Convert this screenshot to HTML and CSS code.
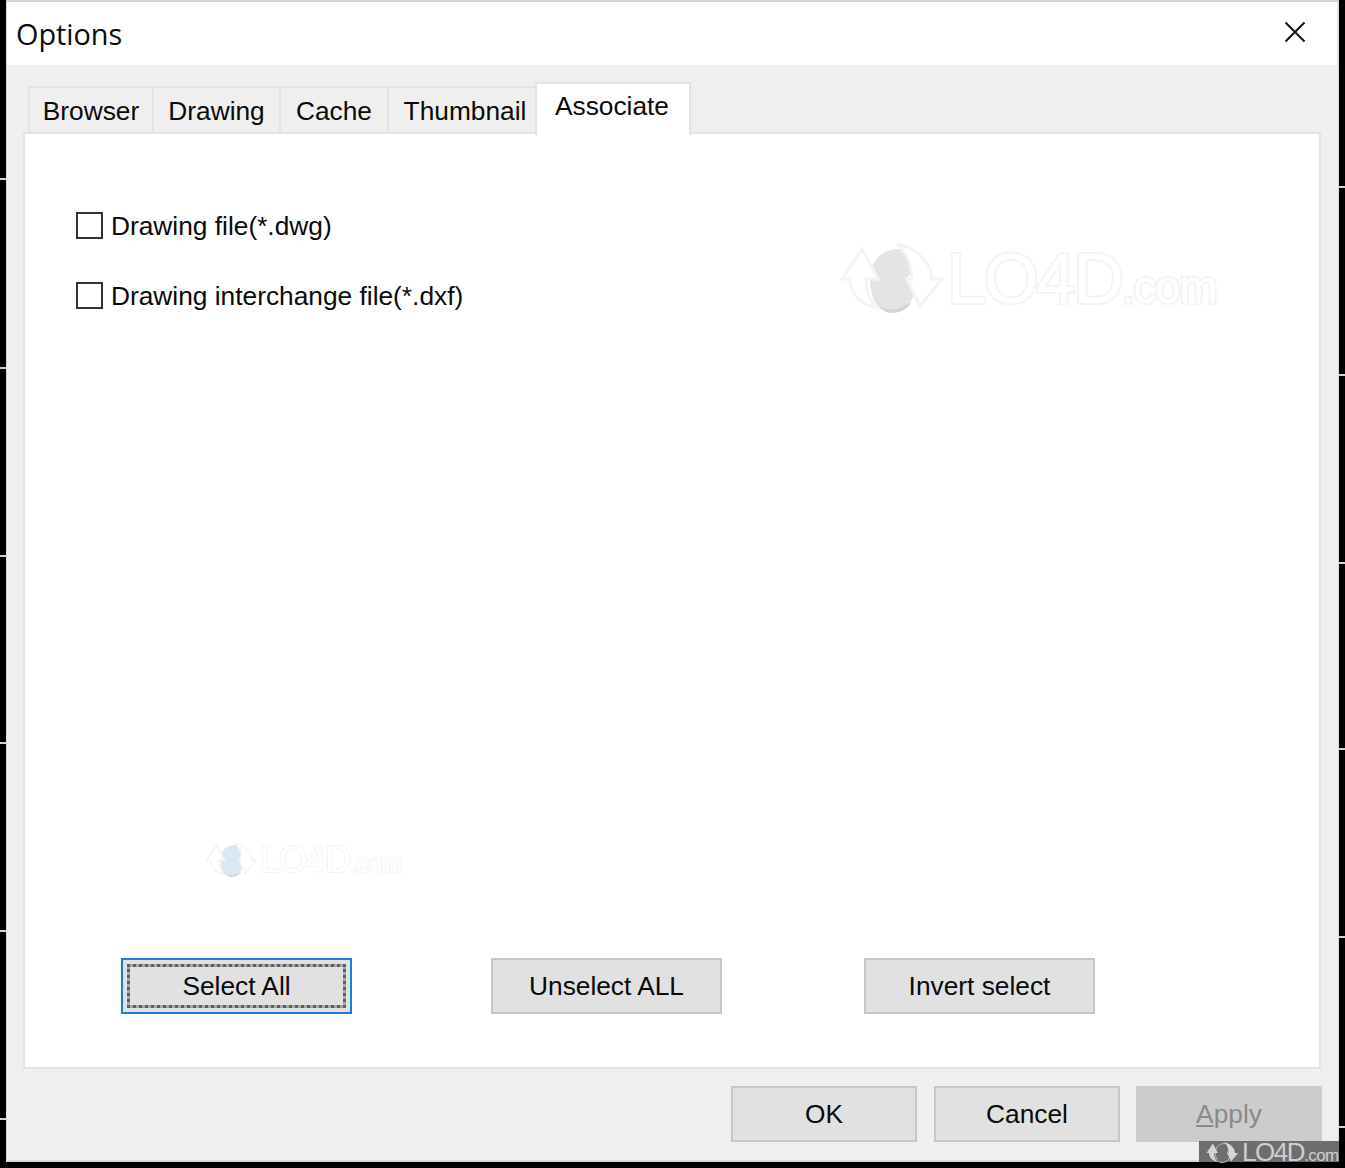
FILE: index.html
```html
<!DOCTYPE html>
<html lang="en">
<head>
<meta charset="utf-8">
<title>Options</title>
<link rel="stylesheet" href="styles.css">
</head>
<body>
<div class="screen">
  <i class="tick tl t1"></i><i class="tick tl t2"></i><i class="tick tl t3"></i><i class="tick tl t4"></i><i class="tick tl t5"></i><i class="tick tl t6"></i>
  <i class="tick tr r1"></i><i class="tick tr r2"></i><i class="tick tr r3"></i><i class="tick tr r4"></i><i class="tick tr r5"></i><i class="tick tr r6"></i>
  <div class="dialog">
    <header class="titlebar">
      <span class="title">Options</span>
      <svg class="close" width="22" height="22" viewBox="0 0 22 22"><path d="M1.5 1.5 20.5 20.5M20.5 1.5 1.5 20.5" stroke="#111" stroke-width="2" fill="none"/></svg>
    </header>
    <main class="content">
      <nav class="tabs">
        <span class="tab tab-browser">Browser</span>
        <span class="tab tab-drawing">Drawing</span>
        <span class="tab tab-cache">Cache</span>
        <span class="tab tab-thumb">Thumbnail</span>
        <span class="tab active">Associate</span>
      </nav>
      <section class="panel">
        <div class="checks">
          <label class="check"><span class="box"></span>Drawing file(*.dwg)</label>
          <label class="check"><span class="box"></span>Drawing interchange file(*.dxf)</label>
        </div>
        <div class="actions">
          <button class="btn focused"><span class="focus-ring">Select All</span></button>
          <button class="btn">Unselect ALL</button>
          <button class="btn">Invert select</button>
        </div>
        <div class="wm wm-big">
          <svg width="106" height="76" viewBox="0 0 106 76"><path class="shade" d="M33 48C35 62 44 72 54 72 62 72 70 68 74 60 66 67 42 68 33 48Z"/><path class="disc-grey" d="M32 38C32 22 42 9 58 8 70 8 77 14 77 24 77 30 72 34 69 36L72 38C77 44 78 52 74 58 68 66 56 70 50 68 38 68 32 52 32 38Z"/><path class="arrows" d="M24 8 4 38H12C12 52 22 63 39 67 32 60 28 50 28 38H40ZM82 65 104 38H94C94 22 80 8 59 3 68 10 74 24 74 38H69Z"/></svg>
          <span class="wm-text">LO4D<small>.com</small></span>
        </div>
        <div class="wm wm-small">
          <svg width="54" height="38" viewBox="0 0 106 76"><path class="shade" d="M33 48C35 62 44 72 54 72 62 72 70 68 74 60 66 67 42 68 33 48Z"/><path class="disc-blue" d="M32 38C32 22 42 9 58 8 70 8 77 14 77 24 77 30 72 34 69 36L72 38C77 44 78 52 74 58 68 66 56 70 50 68 38 68 32 52 32 38Z"/><path class="arrows" d="M24 8 4 38H12C12 52 22 63 39 67 32 60 28 50 28 38H40ZM82 65 104 38H94C94 22 80 8 59 3 68 10 74 24 74 38H69Z"/></svg>
          <span class="wm-text">LO4D<small>.com</small></span>
        </div>
      </section>
      <footer class="footer">
        <button class="btn foot">OK</button>
        <button class="btn foot">Cancel</button>
        <button class="btn foot disabled"><span><u>A</u>pply</span></button>
      </footer>
    </main>
  </div>
  <div class="badge">
    <svg class="badge-icon" width="36" height="24" viewBox="0 0 106 76"><path class="badge-disc" d="M32 38C32 22 42 9 58 8 70 8 77 14 77 24 77 30 72 34 69 36L72 38C77 44 78 52 74 58 68 66 56 70 50 68 38 68 32 52 32 38Z"/><path class="badge-arrows" d="M24 8 4 38H12C12 52 22 63 39 67 32 60 28 50 28 38H40ZM82 65 104 38H94C94 22 80 8 59 3 68 10 74 24 74 38H69Z"/></svg>
    <span class="badge-text">LO4D<small>.com</small></span>
  </div>
</div>
</body>
</html>
```
FILE: styles.css
```css
* { box-sizing: border-box; }
html, body { margin: 0; height: 100%; overflow: hidden; }
body { background: #000; font-family: "Liberation Sans", Arial, sans-serif; color: #0a0a0a; }
.screen { position: relative; width: 1345px; height: 1168px; padding: 0 6px 6px 6px; background: #000; }
.dialog { height: 100%; display: flex; flex-direction: column; background: #efefef; border: 1px solid #d9d9d9; border-width: 2px 1px 2px 1px; border-top-color: #d4d4d4; }
.titlebar { height: 63px; flex: none; margin: 0 1px 0 0; background: #fff; display: flex; align-items: center; justify-content: space-between; padding: 0 31px 0 9px; }
.title { font-family: "Open Sans", sans-serif; font-size: 28.8px; line-height: 1; padding-top: 2px; }
.close { display: block; margin-top: -3px; }
.content { flex: 1; display: flex; flex-direction: column; padding: 17px 16px 0 16px; }
.tabs { height: 50px; flex: none; display: flex; align-items: flex-end; padding-left: 5px; position: relative; z-index: 1; }
.tab { height: 46px; padding-top: 6px; border: 2px solid #e3e3e3; border-width: 2px 0 0 2px; font-size: 26.3px; line-height: 34px; text-align: center; }
.tab-browser { width: 124px; }
.tab-drawing { width: 127px; }
.tab-cache { width: 108px; }
.tab-thumb { width: 148px; padding-left: 6px; }
.active { width: 156px; height: 53px; margin-bottom: -3px; padding-top: 5px; padding-right: 2px; background: #fff; border-width: 2px 2px 0 2px; }
.panel { position: relative; height: 937px; flex: none; width: 1298px; background: #fff; border: 2px solid #e3e3e3; padding: 78px 50px 0 51px; display: flex; flex-direction: column; justify-content: space-between; }
.checks { display: flex; flex-direction: column; gap: 44px; }
.check { display: flex; align-items: center; gap: 8px; height: 26px; font-size: 26.3px; line-height: 30px; padding-top: 2px; }
.box { width: 27px; height: 27px; background: #fff; border: 2px solid #333; margin-top: -1px; }
.actions { display: flex; gap: 139px; padding: 0 0 53px 45px; }
.btn { width: 231px; height: 56px; padding: 0; background: #e1e1e1; border: 2px solid #c6c6c6; font: 26.3px "Liberation Sans", Arial, sans-serif; color: #0a0a0a; }
.actions .btn:last-child { margin-left: 3px; }
.focused { border-color: #1a7fd6; padding: 4px; }
.focus-ring { display: flex; align-items: center; justify-content: center; height: 100%; border: 3px dotted #5f5f5f; background: linear-gradient(#e1e1e1, #e1e1e1) padding-box, #a6a6a6 border-box; padding-top: 1px; }
.footer { display: flex; justify-content: flex-end; gap: 17px; padding: 17px 0 0 0; }
.foot { width: 186px; }
.disabled { margin-left: -1px; background: #ccc; border-color: #ccc; color: #8a8a8a; }
.tick { position: absolute; width: 6px; height: 2px; background: #c9d3e2; }
.tl { left: 0; } .tr { right: 0; }
.t1 { top: 178px; } .t2 { top: 367px; } .t3 { top: 555px; } .t4 { top: 742px; } .t5 { top: 930px; } .t6 { top: 1118px; }
.r1 { top: 186px; } .r2 { top: 374px; } .r3 { top: 562px; } .r4 { top: 748px; } .r5 { top: 936px; } .r6 { top: 1126px; }
.wm { position: absolute; display: flex; align-items: center; }
.arrows { fill: #fff; stroke: #f4f4f4; stroke-width: 3; }
.shade { fill: #d4d4d4; }
.disc-grey { fill: #e4e4e4; }
.disc-blue { fill: #d8e9f4; }
.wm-text { font-family: "Liberation Sans", sans-serif; color: #fff; letter-spacing: -2px; -webkit-text-stroke: 4px #f4f4f4; paint-order: stroke fill; }
.wm-text small { font-size: .65em; letter-spacing: -1px; }
.wm-big { left: 813px; top: 105px; }
.wm-big .wm-text { font-size: 70px; margin-left: 3px; }
.wm-small { left: 179px; top: 705px; }
.wm-small .wm-text { font-size: 36px; margin-left: 2px; letter-spacing: -1px; -webkit-text-stroke-width: 2px; }
.wm-small .wm-text small { font-size: .7em; }
.badge { position: absolute; left: 1199px; top: 1141px; width: 140px; height: 21px; background: #6e6e6e; display: flex; align-items: center; padding-left: 5px; }
.badge-icon { flex: none; margin-top: 3px; }
.badge-disc { fill: #6e6e6e; stroke: #bdbdbd; stroke-width: 3; }
.badge-arrows { fill: #d6d6d6; }
.badge-text { color: #cfcfcf; font-size: 26px; line-height: 21px; letter-spacing: -1.5px; margin: 4px 0 0 2px; }
.badge-text small { font-size: 17px; letter-spacing: -.5px; }
```
